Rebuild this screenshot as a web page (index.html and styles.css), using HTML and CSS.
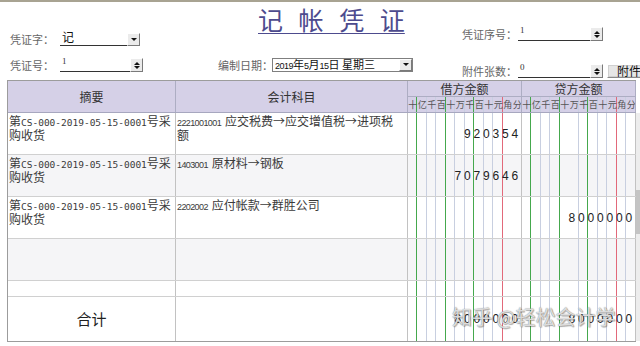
FILE: index.html
```html
<!DOCTYPE html>
<html lang="zh-CN">
<head>
<meta charset="UTF-8" />
<meta name="viewport" content="width=device-width, initial-scale=1" />
<title>记帐凭证</title>
<link rel="stylesheet" href="styles.css">
</head>
<body>
  <div class="topline"></div>

  <header class="voucher-head">
    <div class="head-left">
      <div class="field">
        <span class="label">凭证字：</span>
        <span class="ctl w-word"><span class="val">记</span><span class="btn drop"></span></span>
      </div>
      <div class="field">
        <span class="label">凭证号：</span>
        <span class="ctl w-num"><span class="val small">1</span><span class="btn spin"></span></span>
      </div>
    </div>

    <div class="head-mid">
      <h1 class="title">记 帐 凭 证</h1>
      <div class="field date-field">
        <span class="label">编制日期：</span>
        <span class="datebox"><span><span class="code">2019</span>年<span class="code">5</span>月<span class="code">15</span>日 星期三</span><span class="btn drop"></span></span>
      </div>
    </div>

    <div class="head-right">
      <div class="field">
        <span class="label">凭证序号：</span>
        <span class="ctl w-num2"><span class="val small">1</span><span class="btn spin"></span></span>
      </div>
      <div class="field">
        <span class="label">附件张数：</span>
        <span class="ctl w-num2"><span class="val small">0</span><span class="btn spin"></span></span>
        <button class="attach" type="button">附件</button>
      </div>
    </div>
  </header>

  <main class="sheet">
    <div class="grid">
      <div class="thead">
        <div class="th span2">摘要</div>
        <div class="th span2">会计科目</div>
        <div class="th side">借方金额</div>
        <div class="th side">贷方金额</div>
        <div class="th places amt">十亿千百十万千百十元角分</div>
        <div class="th places amt">十亿千百十万千百十元角分</div>
      </div>

      <div class="tr">
        <div class="td">第<span class="serial">CS-000-2019-05-15-0001</span>号采购收货</div>
        <div class="td"><span class="code">2221001001</span>应交税费→应交增值税→进项税额</div>
        <div class="td amt">920354</div>
        <div class="td amt"></div>
      </div>
      <div class="tr even">
        <div class="td">第<span class="serial">CS-000-2019-05-15-0001</span>号采购收货</div>
        <div class="td"><span class="code">1403001</span>原材料→钢板</div>
        <div class="td amt">7079646</div>
        <div class="td amt"></div>
      </div>
      <div class="tr">
        <div class="td">第<span class="serial">CS-000-2019-05-15-0001</span>号采购收货</div>
        <div class="td"><span class="code">2202002</span>应付帐款→群胜公司</div>
        <div class="td amt"></div>
        <div class="td amt">8000000</div>
      </div>
      <div class="tr even">
        <div class="td"></div>
        <div class="td"></div>
        <div class="td amt"></div>
        <div class="td amt"></div>
      </div>
      <div class="tr short">
        <div class="td"></div>
        <div class="td"></div>
        <div class="td amt"></div>
        <div class="td amt"></div>
      </div>
      <div class="tr total">
        <div class="td sum-label">合计</div>
        <div class="td"></div>
        <div class="td amt">8000000</div>
        <div class="td amt">8000000</div>
      </div>
    </div>
    <div class="scroll"><div class="thumb"></div></div>
  </main>

  <div class="watermark">知乎 @轻松会计学</div>
</body>
</html>
```

FILE: styles.css
```css
/* Temel */
*,
*::before,
*::after {
  box-sizing: border-box;
}

body {
  margin: 0;
  width: 640px;
  height: 346px;
  overflow: hidden;
  position: relative;
  font-family: "Noto Sans CJK SC", sans-serif;
  color: #222;
  background: #fff;
}

.topline {
  height: 2px;
  background: #a8a392;
}

/* Üst bilgi alanı */
.voucher-head {
  display: flex;
  height: 78px;
  padding-left: 10px;
}

.head-left {
  flex: none;
  width: 208px;
  padding-top: 29px;
  display: flex;
  flex-direction: column;
  gap: 11px;
}

.head-mid {
  flex: none;
  width: 244px;
  display: flex;
  flex-direction: column;
}

.head-right {
  flex: 1;
  min-width: 0;
  padding-top: 24px;
  display: flex;
  flex-direction: column;
  gap: 22px;
}

.title {
  margin: 0;
  padding: 3px 0 0 40px;
  font-size: 25px;
  font-weight: normal;
  line-height: 28px;
  color: #4d4b8e;
  word-spacing: 10px;
  text-decoration: underline;
  text-decoration-thickness: 1px;
  text-underline-offset: 3px;
  white-space: nowrap;
}

.field {
  display: flex;
  align-items: center;
  height: 15px;
}

.date-field {
  margin-top: 24px;
}

.label {
  flex: none;
  width: 50px;
  font-size: 11px;
  color: #666;
  white-space: nowrap;
}

.head-mid .label {
  width: 54px;
}

.head-right .label {
  width: 56px;
}

/* Kontroller */
.ctl {
  flex: none;
  display: flex;
  align-items: flex-end;
  height: 15px;
}

.w-word { width: 80px; }
.w-num { width: 83px; }
.w-num2 { width: 85px; }

.ctl .val {
  flex: 1;
  height: 15px;
  border-bottom: 1px solid #333;
  padding-left: 2px;
  font-size: 12px;
  line-height: 12px;
  color: #111;
}

.ctl .val.small {
  font-family: "Liberation Serif", serif;
  font-size: 9px;
  line-height: 8px;
  color: #333;
}

.btn {
  flex: none;
  width: 13px;
  height: 13px;
  background: #ebebeb;
  border: 1px solid;
  border-color: #fff #7a7a7a #7a7a7a #fff;
  display: flex;
  flex-direction: column;
  align-items: center;
  justify-content: center;
  gap: 1px;
}

.btn.spin {
  height: 14px;
}

.btn.drop::after,
.btn.spin::after {
  content: "";
  border-left: 3px solid transparent;
  border-right: 3px solid transparent;
  border-top: 3px solid #111;
}

.btn.spin::before {
  content: "";
  border-left: 3px solid transparent;
  border-right: 3px solid transparent;
  border-bottom: 3px solid #111;
}

.datebox {
  flex: none;
  display: flex;
  align-items: center;
  justify-content: space-between;
  width: 141px;
  height: 14px;
  border: 1px solid #7f7f7f;
  padding-left: 2px;
  font-size: 11px;
  line-height: 12px;
  color: #111;
  white-space: nowrap;
}

.datebox .btn {
  height: 12px;
}

.attach {
  flex: none;
  margin-left: 4px;
  width: 44px;
  height: 14px;
  padding: 0 0 0 9px;
  text-align: left;
  font-family: inherit;
  font-size: 12px;
  line-height: 12px;
  color: #111;
  background: #e6e6e6;
  border: 1px solid;
  border-color: #fff #8a8a8a #8a8a8a #fff;
  box-shadow: inset 0 0 0 1px #d0d0d0;
}

/* Tablo */
.sheet {
  display: flex;
  margin-left: 7px;
}

.grid {
  width: 629px;
  border: 1px solid #9c9c9c;
  border-right: none;
}

.thead,
.tr {
  display: grid;
  grid-template-columns: 168px 232px 114px 114px;
}

.thead {
  grid-template-rows: 16px 15px;
  background: #d5d0e7;
  border-bottom: 1px solid #a7a7bf;
  font-size: 12px;
  color: #333;
}

.th {
  display: flex;
  align-items: center;
  justify-content: center;
  border-right: 1px solid #adadc3;
}

.th.span2 {
  grid-row: span 2;
}

.th.side {
  border-bottom: 1px solid #adadc3;
}

.th.places {
  justify-content: flex-start;
  font-size: 9px;
  letter-spacing: 0.5px;
  color: #555;
  white-space: nowrap;
  overflow: hidden;
}

.tr {
  height: 42px;
  border-bottom: 1px solid #d0d0d0;
}

.tr.even {
  background: #f5f5f7;
}

.tr.short {
  height: 16px;
}

.tr.total {
  height: 44px;
  border-bottom: none;
}

.td {
  border-right: 1px solid #c2c2c2;
  padding: 2px 6px 0 1px;
  font-size: 12px;
  line-height: 12px;
  color: #3a3a3a;
  overflow: hidden;
}

.tr .td:first-child {
  padding-right: 0;
}

.serial {
  font-family: "DejaVu Sans Mono", monospace;
  font-size: 9.5px;
}

.code {
  font-family: "Liberation Sans", sans-serif;
  font-size: 9px;
  letter-spacing: -0.6px;
  margin-right: 4px;
}

.datebox .code {
  letter-spacing: -0.5px;
  margin-right: 0;
}

/* Tutar hücreleri: basamak çizgileri */
.amt {
  padding: 0;
  display: flex;
  align-items: center;
  justify-content: flex-end;
  font-family: "Liberation Sans", sans-serif;
  font-size: 12px;
  letter-spacing: 2.83px;
  color: #222;
  background-image:
    linear-gradient(90deg,
      transparent 8.5px, #45a84d 8.5px 9.5px,
      transparent 9.5px 37px, #45a84d 37px 38px,
      transparent 38px 65.5px, #45a84d 65.5px 66.5px,
      transparent 66.5px 94px, #e2697a 94px 95px,
      transparent 95px),
    repeating-linear-gradient(90deg, transparent 0 8.5px, #c8cfe0 8.5px 9.5px);
}

.th.places.amt {
  padding-left: 0.3px;
  justify-content: flex-start;
  font-family: "Noto Sans CJK SC", sans-serif;
  font-size: 9px;
  letter-spacing: 0.5px;
}

.sum-label {
  display: flex;
  align-items: center;
  justify-content: center;
  padding: 0;
  font-size: 15px;
  color: #222;
}

/* Kaydırma çubuğu */
.scroll {
  width: 4px;
  margin-top: 33px;
  height: 228px;
  background: #ededed;
}

.thumb {
  margin-top: 77px;
  height: 44px;
  background: #c4c4c4;
}

.watermark {
  position: absolute;
  left: 452px;
  top: 305px;
  font-size: 20px;
  line-height: 24px;
  color: rgba(255, 255, 255, 0.75);
  text-shadow: 0 0 1px #666, 1px 1px 1px rgba(0, 0, 0, 0.3);
  white-space: nowrap;
}
```
